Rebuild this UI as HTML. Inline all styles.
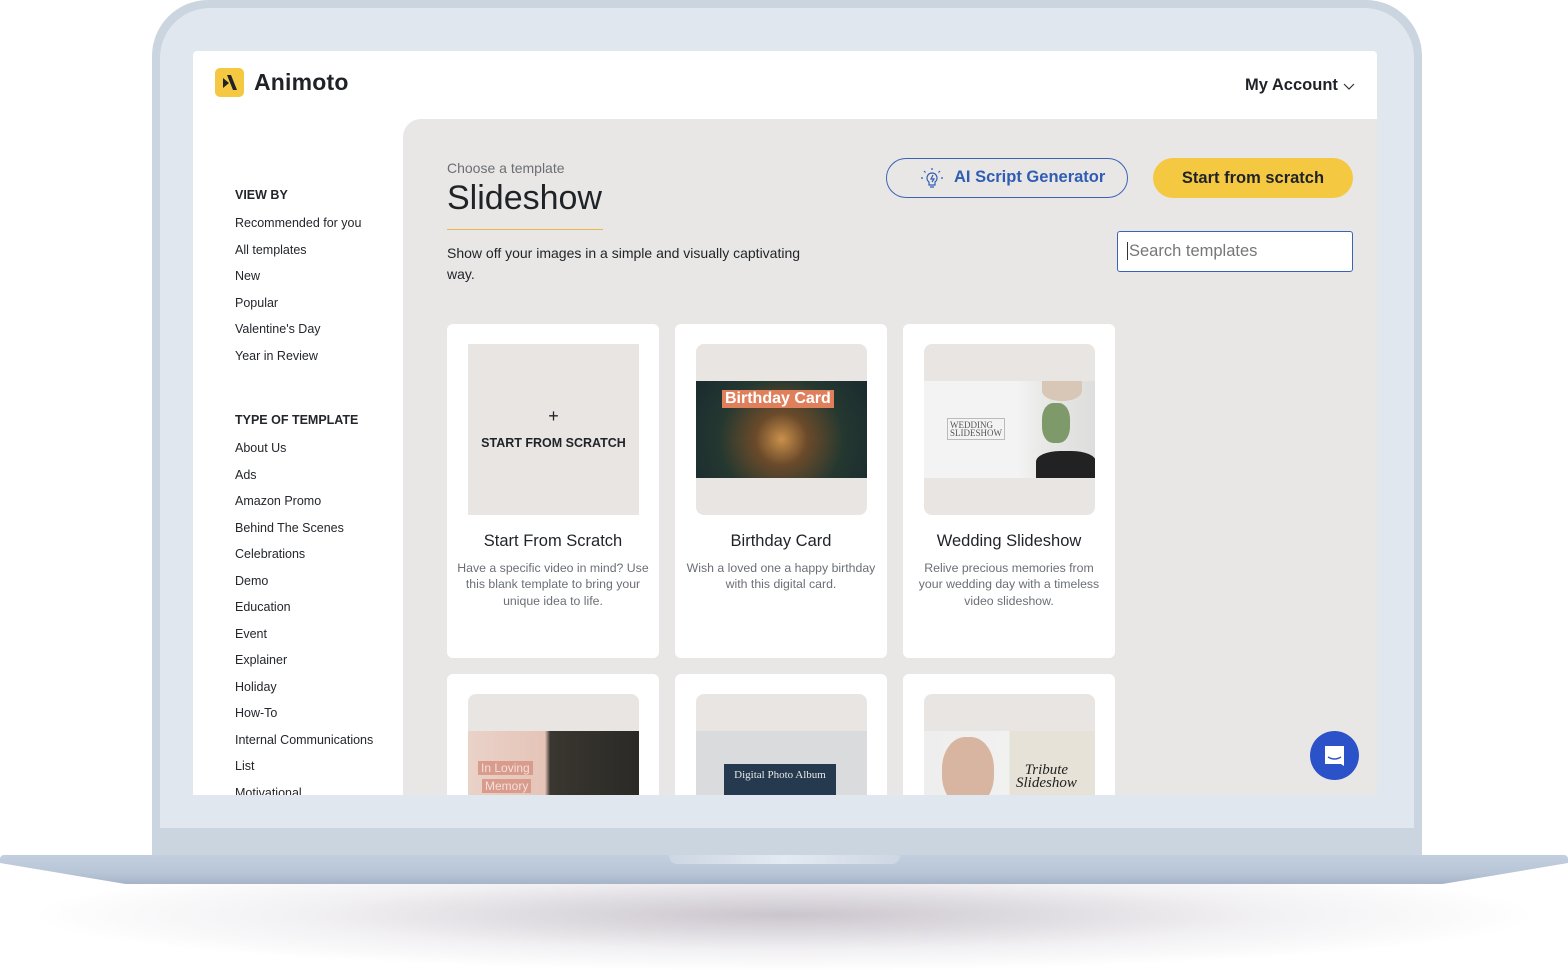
<!DOCTYPE html>
<html><head><meta charset="utf-8"><style>
*{margin:0;padding:0;box-sizing:border-box}
body{width:1568px;height:970px;background:#fff;position:relative;overflow:hidden;font-family:"Liberation Sans",sans-serif;color:#1f2328}
.abs{position:absolute}
.shadow{left:40px;top:860px;width:1488px;height:110px;border-radius:50%;background:radial-gradient(ellipse at center,rgba(150,140,155,.5) 0%,rgba(200,195,205,.25) 45%,rgba(255,255,255,0) 72%)}
.bezel{left:152px;top:0;width:1270px;height:860px;background:#cbd5e0;border-radius:56px 56px 0 0}
.inner{left:160px;top:8px;width:1254px;height:820px;background:#e0e7ef;border-radius:50px 50px 0 0}
.base{left:0;top:855px;width:1568px;height:29px;background:linear-gradient(#c3cfdf,#b8c6d8 60%,#a7b4c8);clip-path:polygon(0 0,100% 0,100% 8px,92% 100%,8% 100%,0 8px);border-radius:4px}
.notch{left:669px;top:855px;width:231px;height:9px;background:linear-gradient(90deg,#cdd6e3,#e4eaf2,#cdd6e3);border-radius:0 0 8px 8px}
.screen{left:193px;top:51px;width:1184px;height:744px;background:#fff;overflow:hidden;border-radius:4px 4px 0 0}
.gray{left:210px;top:68px;width:974px;height:700px;background:#e9e7e5;border-radius:18px 0 0 0}
.side{left:42px;font-size:12.5px;color:#23262b}
.side div{height:26.5px}
.side .h{font-weight:bold;font-size:12.5px;height:28px}
.card{width:212px;height:334px;background:#fff;border-radius:6px}
.thumb{position:absolute;left:21px;top:20px;width:171px;height:171px;background:#e9e5e2;border-radius:8px;overflow:hidden}
.band{position:absolute;left:0;top:37px;width:171px;height:97px}
.ct{position:absolute;top:208px;width:100%;text-align:center;font-size:16.5px;color:#1f2328}
.cd{position:absolute;top:236px;left:8px;right:8px;text-align:center;font-size:12.3px;line-height:16.3px;color:#6b6f75}
</style></head><body>
<div class="abs shadow"></div>
<div class="abs bezel"></div>
<div class="abs inner"></div>
<div class="abs base"></div>
<div class="abs notch"></div>
<div class="abs screen">
  <div class="abs" style="left:22px;top:17px;width:29px;height:29px;background:#f5c842;border-radius:5px">
    <svg width="29" height="29" viewBox="0 0 29 29"><path d="M8 10 L14 15 L8 20 Z" fill="#1f2328"/><path d="M12 7 L16 7 L22 22 L18 22 Z" fill="#1f2328"/></svg>
  </div>
  <div class="abs" style="left:61px;top:18px;font-size:23px;font-weight:bold;color:#1f2328;letter-spacing:.2px">Animoto</div>
  <div class="abs" style="left:1052px;top:25px;font-size:16.5px;font-weight:bold;color:#1f2328">My Account</div>
  <svg class="abs" style="left:1150px;top:32px" width="12" height="8" viewBox="0 0 12 8"><path d="M1 1l5 5 5-5" stroke="#333" stroke-width="1.2" fill="none"/></svg>
  <div class="abs gray"></div>
  <div class="abs side" style="top:137px">
    <div class="h">VIEW BY</div>
    <div>Recommended for you</div><div>All templates</div><div>New</div><div>Popular</div><div>Valentine's Day</div><div>Year in Review</div>
    <div style="height:38px"></div>
    <div class="h">TYPE OF TEMPLATE</div>
    <div>About Us</div><div>Ads</div><div>Amazon Promo</div><div>Behind The Scenes</div><div>Celebrations</div><div>Demo</div><div>Education</div><div>Event</div><div>Explainer</div><div>Holiday</div><div>How-To</div><div>Internal Communications</div><div>List</div><div>Motivational</div>
  </div>
  <div class="abs" style="left:254px;top:109px;font-size:14px;color:#6b6f75">Choose a template</div>
  <div class="abs" style="left:254px;top:128px;font-size:34px;color:#1f2328">Slideshow</div>
  <div class="abs" style="left:254px;top:178px;width:156px;height:1px;background:#e6b94a"></div>
  <div class="abs" style="left:254px;top:192px;width:370px;font-size:14px;line-height:21px;color:#1f2328">Show off your images in a simple and visually captivating way.</div>
  <div class="abs" style="left:693px;top:107px;width:242px;height:40px;border:1.5px solid #3a63b8;border-radius:20px;color:#2f5db4;font-weight:bold;font-size:16.5px;line-height:37px;padding-left:67px">
    <svg class="abs" style="left:34px;top:9px" width="22" height="22" viewBox="0 0 22 22" fill="none" stroke="#2f5db4" stroke-width="1.2"><path d="M11 5a5 5 0 0 0-3 9v3h6v-3a5 5 0 0 0-3-9z"/><path d="M9 19h4M12 7l-2 4h3l-2 3"/><path d="M11 0v2M3 3l1.5 1.5M19 3l-1.5 1.5M0 10h2M20 10h2"/></svg>AI Script Generator</div>
  <div class="abs" style="left:960px;top:107px;width:200px;height:40px;background:#f5c842;border-radius:20px;color:#1f2328;font-weight:bold;font-size:16.5px;line-height:40px;text-align:center">Start from scratch</div>
  <div class="abs" style="left:924px;top:180px;width:236px;height:41px;background:#fff;border:1px solid #3a63b8;border-radius:3px;font-size:16.5px;color:#777;line-height:39px;padding-left:9px"><span style="border-left:1px solid #333;padding-left:1px">Search templates</span></div>

  <div class="abs card" style="left:254px;top:273px"><div class="thumb" style="border-radius:0"><div style="position:absolute;top:62px;width:100%;text-align:center;font-size:18px">+</div><div style="position:absolute;top:92px;width:100%;text-align:center;font-size:12.5px;font-weight:bold">START FROM SCRATCH</div></div>
    <div class="ct">Start From Scratch</div><div class="cd">Have a specific video in mind? Use this blank template to bring your unique idea to life.</div></div>
  <div class="abs card" style="left:482px;top:273px"><div class="thumb"><div class="band" style="background:radial-gradient(circle at 50% 60%,#c9904a 0,#6b4a2a 25%,#243830 60%,#1a2a30 100%)"><div style="position:absolute;left:26px;top:9px;background:#e07f5c;color:#fff;font-weight:bold;font-size:16px;padding:0 3px">Birthday Card</div></div></div>
    <div class="ct">Birthday Card</div><div class="cd">Wish a loved one a happy birthday with this digital card.</div></div>
  <div class="abs card" style="left:710px;top:273px"><div class="thumb"><div class="band" style="background:linear-gradient(90deg,#f3f3f4 55%,#e8e8e6 70%,#ddd 100%)"><div style="position:absolute;left:23px;top:37px;border:1px solid #bbb;font-family:'Liberation Serif',serif;font-size:9px;line-height:8px;padding:2px 2px;color:#555">WEDDING<br>SLIDESHOW</div><div style="position:absolute;left:118px;top:22px;width:28px;height:40px;background:#7f9a6a;border-radius:40%"></div><div style="position:absolute;left:112px;top:70px;width:60px;height:27px;background:#222;border-radius:40% 40% 0 0"></div><div style="position:absolute;left:118px;top:0;width:40px;height:20px;background:#d8c6b6;border-radius:0 0 50% 50%"></div></div></div>
    <div class="ct">Wedding Slideshow</div><div class="cd">Relive precious memories from your wedding day with a timeless video slideshow.</div></div>

  <div class="abs card" style="left:254px;top:623px"><div class="thumb"><div class="band" style="background:linear-gradient(90deg,#e9d2c8 0,#e6c4b8 45%,#3a3630 48%,#2b2a26 100%)"><div style="position:absolute;left:10px;top:30px;background:#d99b8c;color:#f4e0da;font-size:12px;padding:0 3px">In Loving</div><div style="position:absolute;left:14px;top:48px;background:#d99b8c;color:#f4e0da;font-size:12px;padding:0 3px">Memory</div></div></div></div>
  <div class="abs card" style="left:482px;top:623px"><div class="thumb"><div class="band" style="background:#d9dbdc"><div style="position:absolute;left:28px;top:33px;width:112px;height:40px;background:#253a4e;color:#e8e8e8;font-family:'Liberation Serif',serif;font-size:11px;padding-top:5px;text-align:center">Digital Photo Album</div></div></div></div>
  <div class="abs card" style="left:710px;top:623px"><div class="thumb"><div class="band" style="background:linear-gradient(90deg,#eee 0,#f1f1f0 50%,#e6e2d8 50%)"><div style="position:absolute;left:18px;top:6px;width:52px;height:70px;background:#d8b5a0;border-radius:45%"></div><div style="position:absolute;left:92px;top:33px;font-family:'Liberation Serif',serif;font-style:italic;font-size:15px;line-height:13px;text-align:center;color:#222">Tribute<br>Slideshow</div></div></div></div>

  <div class="abs" style="left:1117px;top:680px;width:49px;height:49px;border-radius:50%;background:#2b52c9">
    <svg width="49" height="49" viewBox="0 0 49 49"><path d="M15 15h19v20l-3-2H15z" fill="#fff"/><path d="M18 26q6.5 4 13 0" stroke="#2b52c9" stroke-width="1.5" fill="none"/></svg>
  </div>
</div>
</body></html>
